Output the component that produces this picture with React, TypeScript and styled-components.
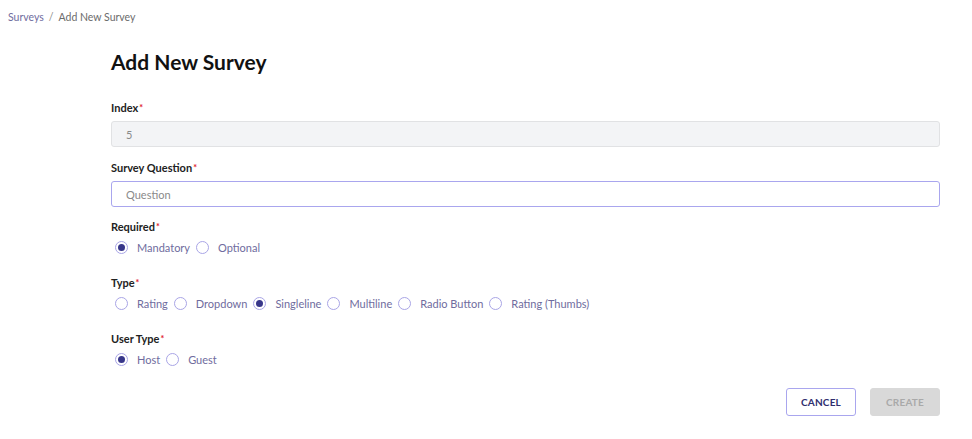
import React from 'react';
import styled, { createGlobalStyle } from 'styled-components';

const GlobalStyle = createGlobalStyle`
  body {
    margin: 0;
    background: #ffffff;
    font-family: Lato, "Open Sans", sans-serif;
  }
`;

type Option = { label: string; checked?: boolean };

function RadioGroup({ name, options }: { name: string; options: Option[] }) {
  return (
    <RadioRow>
      {options.map((o) => (
        <RadioItem key={o.label}>
          <RadioCircle checked={!!o.checked} />
          <RadioText>{o.label}</RadioText>
          <HiddenInput type="radio" name={name} defaultChecked={o.checked} />
        </RadioItem>
      ))}
    </RadioRow>
  );
}

export default function App() {
  return (
    <>
      <GlobalStyle />
      <Page>
        <Breadcrumb>
          <Crumb>Surveys</Crumb>
          <Slash>/</Slash>
          <Current>Add New Survey</Current>
        </Breadcrumb>
        <Form>
          <Title>Add New Survey</Title>

          <Field>
            <Label>Index<Star>*</Star></Label>
            <Input disabledLook value="5" readOnly />
          </Field>

          <Field>
            <Label>Survey Question<Star>*</Star></Label>
            <Input placeholder="Question" />
          </Field>

          <Field radios>
            <Label>Required<Star>*</Star></Label>
            <RadioGroup name="required" options={[{ label: 'Mandatory', checked: true }, { label: 'Optional' }]} />
          </Field>

          <Field radios>
            <Label>Type<Star>*</Star></Label>
            <RadioGroup
              name="type"
              options={[
                { label: 'Rating' },
                { label: 'Dropdown' },
                { label: 'Singleline', checked: true },
                { label: 'Multiline' },
                { label: 'Radio Button' },
                { label: 'Rating (Thumbs)' },
              ]}
            />
          </Field>

          <Field radios>
            <Label>User Type<Star>*</Star></Label>
            <RadioGroup name="user" options={[{ label: 'Host', checked: true }, { label: 'Guest' }]} />
          </Field>

          <Actions>
            <Button>CANCEL</Button>
            <Button primary disabled>CREATE</Button>
          </Actions>
        </Form>
      </Page>
    </>
  );
}

const Page = styled.div`
  width: 972px;
  min-height: 439px;
`;

const Breadcrumb = styled.div`
  display: flex;
  align-items: center;
  gap: 5px;
  padding: 10px 8px 0;
  height: 14px;
  font-size: 10.5px;
  line-height: 14px;
`;

const Crumb = styled.span`
  color: #6f6c9e;
`;

const Slash = styled.span`
  color: #8a8a8a;
`;

const Current = styled.span`
  color: #6b6b6b;
`;

const Form = styled.div`
  display: flex;
  flex-direction: column;
  margin: 0 32px 0 111px;
`;

const Title = styled.h1`
  margin: 24px 0 25px;
  font-size: 21px;
  line-height: 28px;
  font-weight: 700;
  color: #111111;
`;

const Field = styled.div<{ radios?: boolean }>`
  display: flex;
  flex-direction: column;
  gap: ${({ radios }) => (radios ? '5px' : '6px')};
  margin-bottom: ${({ radios }) => (radios ? '21px' : '13px')};
  &:first-of-type {
    margin-bottom: 14px;
  }
`;

const Label = styled.label`
  font-size: 11px;
  line-height: 14px;
  font-weight: 700;
  color: #222222;
`;

const Star = styled.span`
  color: #e0202a;
  font-size: 9px;
  vertical-align: top;
  margin-left: 1px;
`;

const Input = styled.input<{ disabledLook?: boolean }>`
  box-sizing: border-box;
  width: 100%;
  height: 26px;
  padding: 0 14px;
  border-radius: 3px;
  border: 1px solid ${({ disabledLook }) => (disabledLook ? '#e1e2e4' : '#a9a6ee')};
  background: ${({ disabledLook }) => (disabledLook ? '#f3f4f6' : '#ffffff')};
  color: #8a8a8a;
  font-family: inherit;
  font-size: 11px;
  outline: none;
  &::placeholder {
    color: #8a8a8a;
  }
`;

const RadioRow = styled.div`
  display: flex;
  align-items: center;
  height: 16px;
  padding-left: 4px;
  gap: 6px;
`;

const RadioItem = styled.label`
  display: flex;
  align-items: center;
  gap: 9px;
  cursor: pointer;
`;

const RadioCircle = styled.span<{ checked: boolean }>`
  box-sizing: border-box;
  width: 13px;
  height: 13px;
  border-radius: 50%;
  border: 1px solid #a9a5e6;
  display: flex;
  align-items: center;
  justify-content: center;
  &::after {
    content: '';
    width: 7px;
    height: 7px;
    border-radius: 50%;
    background: ${({ checked }) => (checked ? '#38378a' : 'transparent')};
  }
`;

const RadioText = styled.span`
  font-size: 11px;
  color: #6f6c9e;
`;

const HiddenInput = styled.input`
  display: none;
`;

const Actions = styled.div`
  display: flex;
  justify-content: flex-end;
  gap: 14px;
`;

const Button = styled.button<{ primary?: boolean }>`
  box-sizing: border-box;
  width: 70px;
  height: 28px;
  border-radius: 3px;
  border: 1px solid ${({ primary }) => (primary ? '#d9d9d9' : '#a9a6ee')};
  background: ${({ primary }) => (primary ? '#d9d9d9' : '#ffffff')};
  color: ${({ primary }) => (primary ? '#a9a9a9' : '#2f2e6e')};
  font-family: inherit;
  font-size: 10px;
  font-weight: 700;
  letter-spacing: 0.2px;
`;
